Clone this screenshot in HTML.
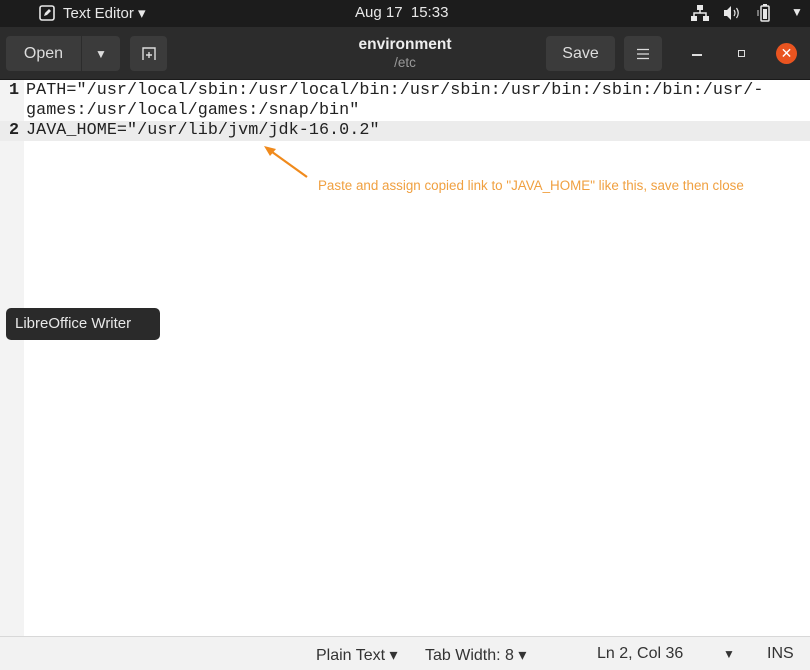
<!DOCTYPE html>
<html><head><style>
*{margin:0;padding:0;box-sizing:border-box}
body{width:810px;height:670px;overflow:hidden;background:#fff;font-family:"Liberation Sans","DejaVu Sans",sans-serif;position:relative}
.top{position:absolute;left:0;top:0;width:810px;height:27px;background:#1c1c1c;color:#e8e8e8;font-size:15px}
.hdr{position:absolute;left:0;top:27px;width:810px;height:53px;background:#2c2c2c;border-bottom:1px solid #1a1a1a}
.btn{position:absolute;top:9px;height:35px;background:#3b3b3b;border-radius:4px;color:#ddd;font-size:16px;display:flex;align-items:center;justify-content:center}
.gut{position:absolute;left:0;top:80px;width:24px;height:556px;background:#f3f3f3}
.hl{position:absolute;left:0;top:121px;width:810px;height:20px;background:#ececec}
.code{position:absolute;font-family:"Liberation Mono","DejaVu Sans Mono",monospace;font-size:16.75px;color:#222;line-height:20px;white-space:pre;letter-spacing:0.05px}
.status{position:absolute;left:0;top:636px;width:810px;height:34px;background:#f2f2f2;border-top:1px solid #d8d8d8;color:#333;font-size:16px}
.status span{position:absolute;top:8px}
</style></head><body>
<div class="top">
 <svg style="position:absolute;left:39px;top:5px" width="16" height="16"><rect x="1" y="1" width="14" height="14" rx="2" fill="none" stroke="#e8e8e8" stroke-width="1.6"/><path d="M5 11 L6 8 L10 4 L12 6 L8 10 Z" fill="#e8e8e8"/></svg>
 <span style="position:absolute;left:63px;top:4px">Text Editor ▾</span>
 <span style="position:absolute;left:355px;top:4px">Aug 17&nbsp;&nbsp;15:33</span>
 <svg style="position:absolute;left:691px;top:5px" width="18" height="16" fill="#e8e8e8"><rect x="6" y="0" width="6" height="5"/><rect x="0" y="11" width="6" height="5"/><rect x="12" y="11" width="6" height="5"/><path d="M9 5v3M3 11V8h12v3" stroke="#e8e8e8" stroke-width="1.5" fill="none"/></svg>
 <svg style="position:absolute;left:724px;top:6px" width="18" height="14" fill="#e8e8e8"><path d="M0 4h3l4-4v14l-4-4H0z"/><path d="M10 4q2 3 0 6M12.5 2q3.5 5 0 10" stroke="#e8e8e8" stroke-width="1.2" fill="none"/></svg>
 <svg style="position:absolute;left:756px;top:4px" width="18" height="18"><path d="M2 6v6" stroke="#aaa" stroke-width="1.3"/><rect x="5" y="2" width="8" height="15" rx="1" fill="none" stroke="#e8e8e8" stroke-width="1.5"/><rect x="7" y="0" width="4" height="2" fill="#e8e8e8"/><rect x="7" y="5" width="4" height="10" fill="#e8e8e8"/></svg>
 <span style="position:absolute;left:791px;top:5px;font-size:12px">▼</span>
</div>
<div class="hdr">
 <div class="btn" style="left:6px;width:75px;border-radius:4px 0 0 4px">Open</div>
 <div class="btn" style="left:82px;width:38px;border-radius:0 4px 4px 0;font-size:12px">▼</div>
 <div class="btn" style="left:130px;width:37px"><svg width="18" height="18"><path d="M3 15V3h12v12" fill="none" stroke="#ddd" stroke-width="1.4"/><path d="M9 7v6M6 10h6" stroke="#ddd" stroke-width="1.4"/></svg></div>
 <div style="position:absolute;left:0;width:810px;top:9px;text-align:center;color:#eee;font-weight:bold;font-size:15.5px">environment</div>
 <div style="position:absolute;left:0;width:810px;top:28px;text-align:center;color:#999;font-size:13.5px">/etc</div>
 <div class="btn" style="left:546px;width:69px">Save</div>
 <div class="btn" style="left:624px;width:38px"><svg width="14" height="12"><path d="M1 1.5h12M1 6h12M1 10.5h12" stroke="#ddd" stroke-width="1.3"/></svg></div>
 <div style="position:absolute;left:692px;top:27px;width:10px;height:1.5px;background:#ddd"></div>
 <div style="position:absolute;left:738px;top:23px;width:7px;height:7px;border:1.3px solid #ddd"></div>
 <div style="position:absolute;left:776px;top:16px;width:21px;height:21px;border-radius:50%;background:#e95420;color:#fff;font-size:14px;text-align:center;line-height:21px">✕</div>
</div>
<div class="gut"></div>
<div class="hl"></div>
<div class="code" style="left:9px;top:81px;font-weight:bold">1</div>
<div class="code" style="left:9px;top:121px;font-weight:bold">2</div>
<div class="code" style="left:26px;top:81px">PATH="/usr/local/sbin:/usr/local/bin:/usr/sbin:/usr/bin:/sbin:/bin:/usr/-
games:/usr/local/games:/snap/bin"
JAVA_HOME="/usr/lib/jvm/jdk-16.0.2"</div>
<svg style="position:absolute;left:260px;top:140px" width="60" height="45"><path d="M47 37 L8 9" stroke="#f08a1c" stroke-width="2.2"/><path d="M4 6 L16 9 L10 16 Z" fill="#f08a1c"/></svg>
<div style="position:absolute;left:318px;top:178px;color:#f0a040;font-size:13.4px">Paste and assign copied link to "JAVA_HOME" like this, save then close</div>
<div style="position:absolute;left:6px;top:308px;width:154px;height:32px;background:#2a2a2a;border-radius:5px;color:#e8e8e8;font-size:15px;line-height:32px;padding-left:9px">LibreOffice Writer</div>
<div class="status">
 <span style="left:316px">Plain Text ▾</span>
 <span style="left:425px">Tab Width: 8 ▾</span>
 <span style="left:597px">Ln 2, Col 36</span>
 <span style="left:723px;font-size:12px;top:10px">▼</span>
 <span style="left:767px">INS</span>
</div>
</body></html>
